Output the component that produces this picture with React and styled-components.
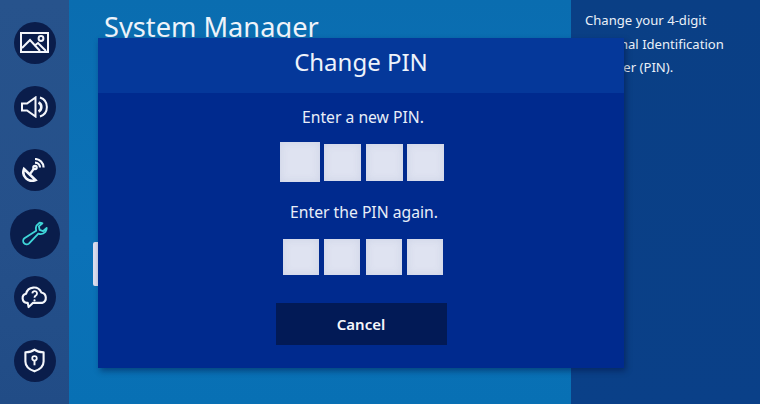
import styled, { createGlobalStyle } from "styled-components";

const GlobalStyle = createGlobalStyle`
  html, body {
    margin: 0;
    padding: 0;
    background: #0a3f85;
  }
`;

const Screen = styled.div`
  position: relative;
  width: 760px;
  height: 404px;
  overflow: hidden;
  display: flex;
  font-family: "Noto Sans", "Open Sans", sans-serif;
  color: #f2f5fb;
`;

const Sidebar = styled.nav`
  width: 69px;
  flex: none;
  box-sizing: border-box;
  padding-top: 11.5px;
  background: linear-gradient(180deg, #27538c 0%, #25508a 60%, #214c86 100%);
  display: flex;
  flex-direction: column;
  align-items: center;
`;

const Slot = styled.div`
  height: 63.5px;
  flex: none;
  display: flex;
  align-items: center;
  justify-content: center;
`;

const Circle = styled.div`
  width: ${(p) => (p.$active ? 50 : 42)}px;
  height: ${(p) => (p.$active ? 50 : 42)}px;
  border-radius: 50%;
  background: #0a1d4b;
  display: flex;
  align-items: center;
  justify-content: center;
  color: ${(p) => (p.$active ? "#3fd6d8" : "#f4f6fb")};
`;

const Main = styled.main`
  width: 502px;
  flex: none;
  box-sizing: border-box;
  padding: 8px 0 0 35px;
  background: linear-gradient(180deg, #0a6db0 0%, #0b72b8 60%, #0870b4 100%);
`;

const Title = styled.h1`
  margin: 0;
  font-size: 27.2px;
  line-height: 38px;
  font-weight: 400;
  color: #eef3fa;
`;

const Help = styled.aside`
  flex: 1;
  box-sizing: border-box;
  padding: 9px 0 0 14px;
  background: linear-gradient(180deg, #0a3f85 0%, #0a4088 100%);
  font-size: 13.1px;
  line-height: 23.5px;
  color: #e9eff8;
`;

const Dialog = styled.section`
  position: absolute;
  left: 98px;
  top: 38px;
  width: 526px;
  height: 330px;
  background: #002a8e;
  box-shadow: 2px 3px 6px rgba(0, 15, 60, 0.45);
  display: flex;
  flex-direction: column;
  align-items: center;
`;

const DialogHeader = styled.header`
  align-self: stretch;
  height: 55px;
  flex: none;
  background: #05389a;
  text-align: center;
  font-size: 24px;
  line-height: 48px;
  color: #eef3fb;
`;

const Prompt = styled.p`
  margin: ${(p) => p.$top}px 0 0 ${(p) => p.$shift}px;
  font-size: 15.7px;
  line-height: 20px;
  color: #e8eef8;
`;

const PinRow = styled.div`
  margin: ${(p) => p.$top}px 0 0 ${(p) => p.$shift}px;
  height: ${(p) => p.$height}px;
  display: flex;
  align-items: center;
  gap: ${(p) => p.$gap}px;
`;

const PinCell = styled.div`
  width: ${(p) => p.$size}px;
  height: ${(p) => p.$size}px;
  background: #dfe3f1;
  box-shadow: inset 0 0 8px rgba(190, 196, 220, 0.55);
`;

const CancelButton = styled.button`
  margin-top: 28px;
  width: 171px;
  height: 42px;
  border: 0;
  padding: 0;
  background: #021a56;
  color: #f5f7fc;
  font-family: inherit;
  font-size: 15px;
  font-weight: 600;
`;

const ScrollTab = styled.div`
  position: absolute;
  left: 93px;
  top: 242px;
  width: 6px;
  height: 44px;
  border-radius: 2px 0 0 2px;
  background: #dcdff0;
`;

const ImageIcon = () => (
  <svg width="30" height="22" viewBox="0 0 30 22" fill="none" stroke="currentColor" strokeWidth="2">
    <rect x="1" y="1" width="27" height="19" />
    <path d="M2 16 L10 8 L20 19 M14 14 L18 11 L26 19" />
    <circle cx="21" cy="6.5" r="2.4" />
  </svg>
);

const SoundIcon = () => (
  <svg width="28" height="22" viewBox="0 0 28 22" fill="none" stroke="currentColor" strokeWidth="2">
    <path d="M1 7.5 H6 L14.5 1.5 V20.5 L6 14.5 H1 Z" />
    <path d="M17.5 6.5 A5 5 0 0 1 17.5 15.5" strokeWidth="2.6" />
    <path d="M19 1.5 A10 10 0 0 1 19 20.5" />
  </svg>
);

const DishIcon = () => (
  <svg width="26" height="24" viewBox="0 0 26 24" fill="none" stroke="currentColor" strokeWidth="2.2">
    <path d="M2 11 L13.5 22 A8.6 8.6 0 0 1 2 11 Z" strokeWidth="2.6" />
    <path d="M8 16 L12 10.5" />
    <circle cx="13" cy="9.5" r="1.7" />
    <path d="M13 4.6 A5 5 0 0 1 18 9.6" />
    <path d="M13 1 A8.6 8.6 0 0 1 21.6 9.6" />
  </svg>
);

const WrenchIcon = () => (
  <svg width="26" height="25" viewBox="0 0 28 27" fill="none" stroke="currentColor" strokeWidth="2" strokeLinejoin="round">
    <path d="M19 1.8 L15.6 5 A7 7 0 0 0 15.3 10.6 L2.6 18.6 A3.6 3.6 0 0 0 7.4 24.4 L17.6 13.6 A7 7 0 0 0 25.2 11.8 A7 7 0 0 0 26.6 7.6 L22.6 11 L19 9.6 L18.2 5.8 L22 2.4 A7 7 0 0 0 19 1.8 Z" />
  </svg>
);

const CloudIcon = () => (
  <svg width="27" height="24" viewBox="0 0 32 28" fill="none" stroke="currentColor" strokeWidth="2.5" strokeLinejoin="round">
    <path d="M8 21 H7 A5.5 5.5 0 0 1 6 10.2 A9.5 9.5 0 0 1 24 8.6 A6.4 6.4 0 0 1 25 21 H14 L9 26 Z" />
    <path d="M13.4 9.6 A2.8 2.8 0 1 1 17.4 12.4 C16.4 13 16 13.6 16 14.8" strokeWidth="2.2" />
    <circle cx="16" cy="18" r="1.3" fill="currentColor" stroke="none" />
  </svg>
);

const ShieldIcon = () => (
  <svg width="21" height="25" viewBox="0 0 24 28" fill="none" stroke="currentColor" strokeWidth="2.4" strokeLinejoin="round">
    <path d="M12 1.6 C15 4 19 4.6 22.4 4.6 V15 C22.4 20.4 17.4 24.4 12 26.4 C6.6 24.4 1.6 20.4 1.6 15 V4.6 C5 4.6 9 4 12 1.6 Z" />
    <circle cx="12" cy="11.5" r="2.6" strokeWidth="2" />
    <path d="M12 14 V19.5" strokeWidth="2.2" />
  </svg>
);

const menu = [
  { id: "picture", Icon: ImageIcon },
  { id: "sound", Icon: SoundIcon },
  { id: "broadcast", Icon: DishIcon },
  { id: "general", Icon: WrenchIcon, active: true },
  { id: "support", Icon: CloudIcon },
  { id: "privacy", Icon: ShieldIcon },
];

const App = () => {
  return (
    <Screen>
      <GlobalStyle />
      <Sidebar>
        {menu.map(({ id, Icon, active }) => (
          <Slot key={id}>
            <Circle $active={active}>
              <Icon />
            </Circle>
          </Slot>
        ))}
      </Sidebar>
      <Main>
        <Title>System Manager</Title>
      </Main>
      <Help>
        Change your 4-digit
        <br />
        Personal Identification
        <br />
        Number (PIN).
      </Help>
      <ScrollTab />
      <Dialog>
        <DialogHeader>Change PIN</DialogHeader>
        <Prompt $top={14} $shift={4}>Enter a new PIN.</Prompt>
        <PinRow $top={15} $shift={2} $height={40} $gap={4.3}>
          <PinCell $size={40} />
          <PinCell $size={37} />
          <PinCell $size={37} />
          <PinCell $size={37} />
        </PinRow>
        <Prompt $top={20} $shift={6}>Enter the PIN again.</Prompt>
        <PinRow $top={17} $shift={4} $height={36} $gap={5.3}>
          <PinCell $size={36} />
          <PinCell $size={36} />
          <PinCell $size={36} />
          <PinCell $size={36} />
        </PinRow>
        <CancelButton>Cancel</CancelButton>
      </Dialog>
    </Screen>
  );
};

export default App;
